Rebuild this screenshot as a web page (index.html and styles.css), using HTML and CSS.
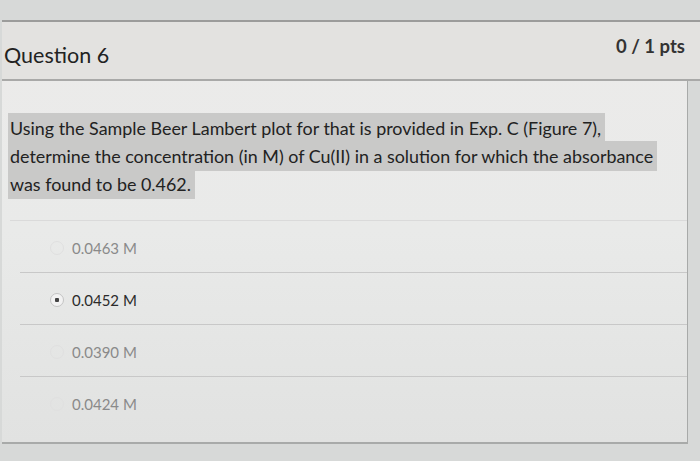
FILE: index.html
```html
<!DOCTYPE html>
<html lang="en">
<head>
  <meta charset="UTF-8" />
  <meta name="viewport" content="width=device-width, initial-scale=1.0"/>
  <title>Question 6</title>
  <link rel="stylesheet" href="styles.css">
</head>
<body>
  <div class="question">
    <div class="header">
      <div class="title">Question 6</div>
      <div class="points">0 / 1 pts</div>
    </div>

    <div class="text">
      <span class="selected">Using the Sample Beer Lambert plot for that is provided in Exp. C (Figure 7),</span><br>
      <span class="selected">determine the concentration (in M) of Cu(II) in a solution for which the absorbance</span><br>
      <span class="selected">was found to be 0.462.</span>
    </div>

    <div class="answers">
      <div class="answer">
        <span class="radio"></span>
        <span class="label">0.0463 M</span>
      </div>
      <div class="answer chosen">
        <span class="radio"></span>
        <span class="label">0.0452 M</span>
      </div>
      <div class="answer">
        <span class="radio"></span>
        <span class="label">0.0390 M</span>
      </div>
      <div class="answer">
        <span class="radio"></span>
        <span class="label">0.0424 M</span>
      </div>
    </div>
  </div>
</body>
</html>
```

FILE: styles.css
```css
body {
  font-family: Lato, "Open Sans", sans-serif;
  background: #d7d9d8;
  margin: 0;
  color: #2d3b45;
  overflow: hidden;
}

.question {
  margin: 20px 12px 0 2px;
  height: 422px;
  background: linear-gradient(180deg, #ecebea 0%, #e9eae9 50%, #e1e2e1 100%);
  border-right: 1px solid #a8aaa9;
  border-bottom: 2px solid #a8aaa9;
}

.header {
  display: flex;
  justify-content: space-between;
  height: 57px;
  margin-right: -13px;
  padding: 0 15px 0 2px;
  background: #e3e2e0;
  border-top: 2px solid #9c9c9b;
  border-bottom: 2px solid #a9a9a8;
}

.title {
  font-size: 21.5px;
  margin-top: 20px;
  color: #222;
}

.points {
  font-size: 18.5px;
  font-weight: bold;
  margin-top: 13px;
  color: #333;
}

.text {
  padding: 33px 0 0 6px;
  font-size: 17.9px;
  line-height: 28px;
  color: #222;
}

.selected {
  background: #c9c9c8;
  padding: 4px 4px 4px 2px;
}

.answers {
  margin-top: 22px;
  border-top: 1px solid #dadada;
  margin-left: 8px;
}

.answer {
  display: flex;
  align-items: center;
  height: 48px;
  padding: 3px 0 0 30px;
  margin-left: 10px;
  border-bottom: 1px solid #c8c8c8;
  font-size: 15px;
  color: #8a8a8a;
}

.answer:last-child {
  border-bottom: none;
}

.radio {
  width: 14px;
  height: 14px;
  border-radius: 50%;
  border: 1px solid #e0e0e0;
  margin-right: 8px;
  box-sizing: border-box;
}

.chosen {
  color: #2b2b2b;
}

.chosen .radio {
  border-color: #c4c4c4;
  background: radial-gradient(circle, #444 0 2px, #f2f2f2 2.5px);
}
```
